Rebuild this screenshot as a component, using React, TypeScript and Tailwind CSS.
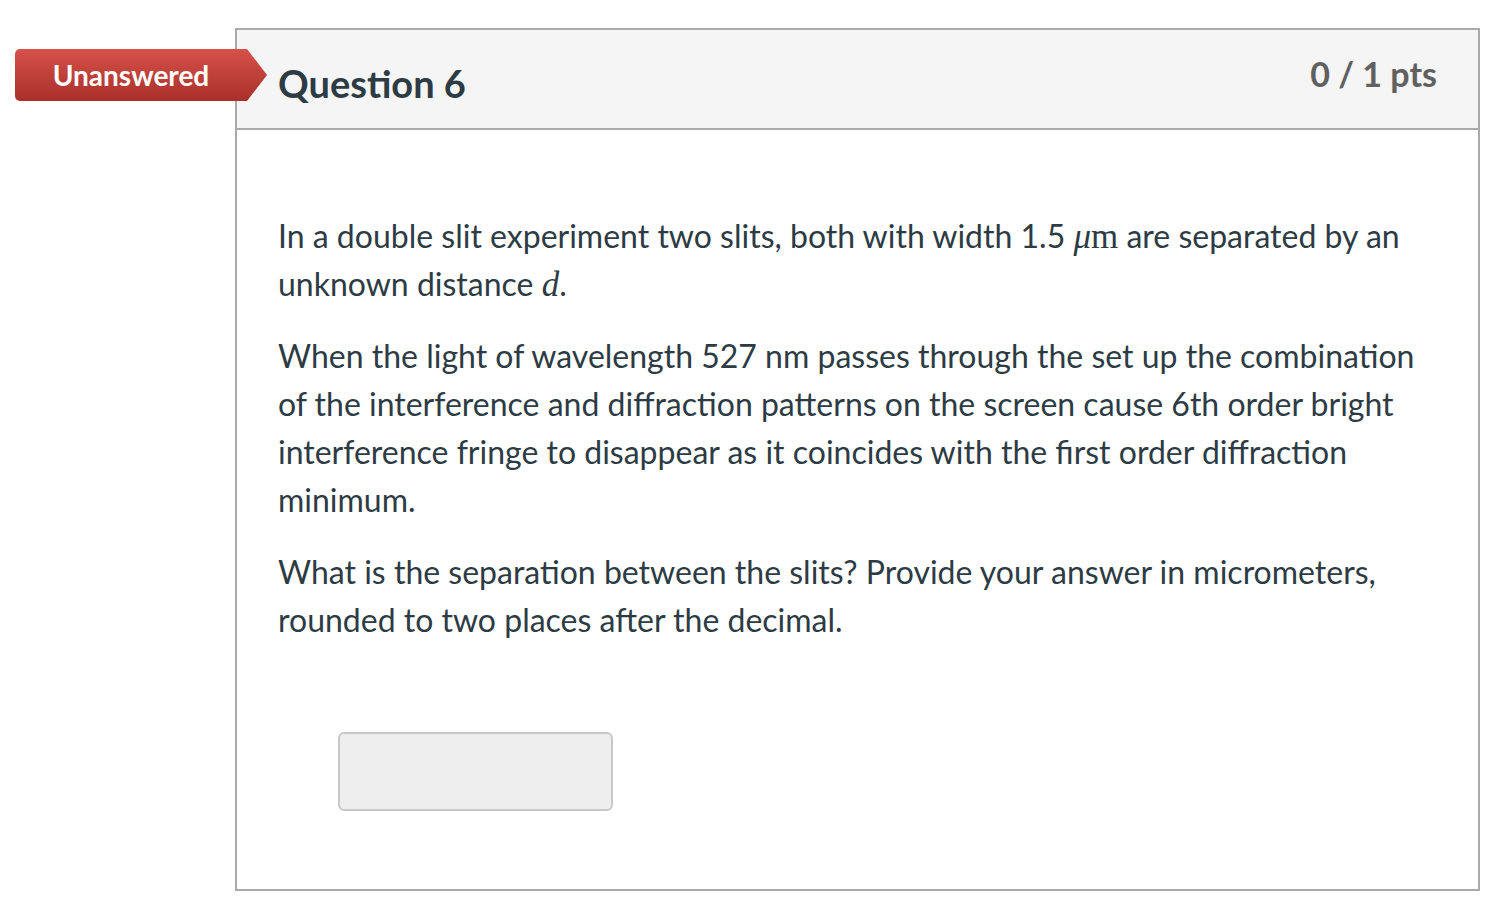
export default function App() {
  return (
    <div
      className="min-h-screen bg-white pt-[28px] pl-[235px] pr-[24px]"
      style={{ fontFamily: "Lato, 'Open Sans', sans-serif" }}
    >
      <div className="relative w-[1245px] h-[863px] border-2 border-[#aaaaaa] flex flex-col">
        {/* status badge, hangs over the card edge */}
        <div className="absolute left-[-222px] top-[19px] w-[252px] h-[52px] rounded-l-[5px] bg-gradient-to-b from-[#d65149] to-[#a8302a] [clip-path:polygon(0_0,calc(100%-20px)_0,100%_50%,calc(100%-20px)_100%,0_100%)] flex items-center justify-center pr-[20px]">
          <span className="text-white font-bold text-[28px] leading-none">Unanswered</span>
        </div>

        <div className="h-[100px] bg-[#f5f5f5] border-b-2 border-[#aaaaaa] flex justify-between items-start px-[41px]">
          <h2 className="mt-[31px] text-[38px] leading-[44px] font-bold text-[#2d3b45]">Question 6</h2>
          <div className="mt-[24px] text-[34px] leading-[40px] font-bold text-[#606060]">0 / 1 pts</div>
        </div>

        <div className="flex-1 px-[41px] pt-[82px] text-[32px] leading-[48px] text-[#2d3b45]">
          <p>
            In a double slit experiment two slits, both with width 1.5{" "}
            <span
              style={{ fontFamily: "'Liberation Serif', 'DejaVu Serif', serif" }}
              className="text-[35px] leading-none"
            >
              <i>μ</i>m
            </span>{" "}
            are separated by an unknown distance{" "}
            <i
              style={{ fontFamily: "'Liberation Serif', 'DejaVu Serif', serif" }}
              className="text-[35px] leading-none"
            >
              d
            </i>
            .
          </p>
          <p className="mt-[24px]">
            When the light of wavelength 527 nm passes through the set up the combination of the interference and
            diffraction patterns on the screen cause 6th order bright interference fringe to disappear as it coincides
            with the first order diffraction minimum.
          </p>
          <p className="mt-[24px]">
            What is the separation between the slits? Provide your answer in micrometers, rounded to two places after
            the decimal.
          </p>
          <div className="mt-[88px] ml-[60px] w-[275px] h-[79px] rounded-[6px] border-2 border-[#c8c8c8] bg-[#eeeeee]" />
        </div>
      </div>
    </div>
  );
}
